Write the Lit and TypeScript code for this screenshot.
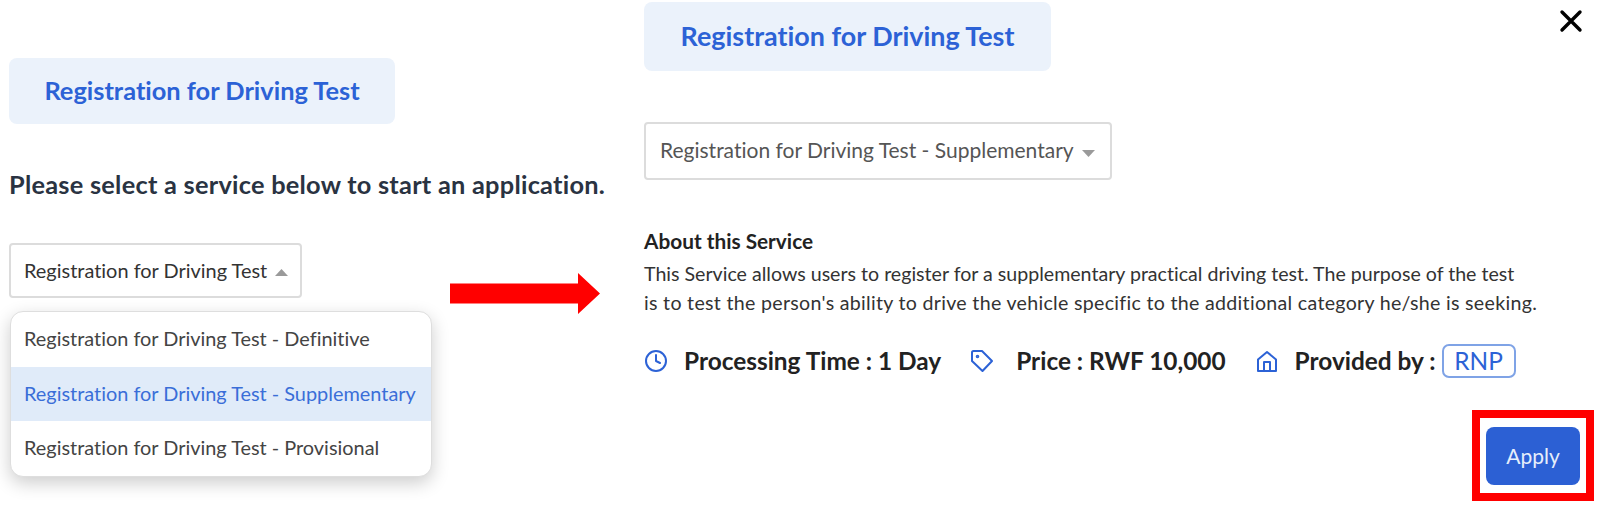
import { LitElement, html, css } from "lit";
import { customElement } from "lit/decorators.js";

@customElement("app-root")
export class AppRoot extends LitElement {
  static styles = css`
    :host { display: block; width: 1600px; height: 509px; position: relative; overflow: hidden; background: #fff; font-family: Lato, "Open Sans", sans-serif; font-variant-ligatures: none; color: #333; }
    .page { display: flex; height: 509px; }
    .left { width: 644px; flex: none; padding: 58px 0 0 9px; box-sizing: border-box; }
    .right { flex: 1; padding-top: 2px; display: flex; flex-direction: column; align-items: flex-start; }
    .tile { display: flex; align-items: center; justify-content: center; background: #ebf2fb; border-radius: 8px; color: #2c62d6; font-weight: 700; box-sizing: border-box; }
    .tile.a { width: 386px; height: 66px; font-size: 25.4px; padding-bottom: 3px; }
    .tile.b { width: 407px; height: 69px; font-size: 26.9px; padding-bottom: 3px; }
    h2 { margin: 42px 0 0; font-size: 25.35px; line-height: 36px; font-weight: 700; color: #2a3342; letter-spacing: 0.25px; white-space: nowrap; }
    .select { display: inline-flex; align-items: center; gap: 8px; border: 2px solid #dcdcdc; border-radius: 4px; box-sizing: border-box; background: #fff; white-space: nowrap; }
    .select.a { margin-top: 41px; width: 293px; height: 55px; padding: 0 0 2px 13px; color: #333; font-size: 19.95px; }
    .select.a svg { margin-top: 5px; }
    .select.b { margin-top: 51px; width: 468px; height: 58px; padding: 0 0 3px 14px; color: #555; font-size: 21px; }
    .select.b svg { margin-top: 7px; }
    .menu { margin: 13px 0 0 1px; width: 422px; height: 166px; border-radius: 13px; background: #fff; border: 1px solid #dedede; box-sizing: border-box; box-shadow: 0 6px 18px rgba(0,0,0,.2); overflow: hidden; display: flex; flex-direction: column; }
    .opt { flex: 1; display: flex; align-items: center; padding: 0 0 3px 13px; font-size: 19.9px; color: #444; white-space: nowrap; }
    .opt.on { background: #e0ebf9; color: #3a6ed8; }
    .about { margin-top: 46px; font-size: 19.6px; line-height: 29.5px; color: #333; white-space: nowrap; }
    .about b { display: block; font-weight: 700; color: #222; font-size: 20.8px; margin-bottom: 3px; }
    .line { display: block; }
    .line.stretch { letter-spacing: 0.3px; }
    .meta { display: flex; align-items: center; height: 34px; margin-top: 26px; font-size: 24.4px; font-weight: 700; color: #222; white-space: nowrap; }
    .meta svg { width: 24px; height: 24px; flex: none; fill: none; stroke: #2c62d6; stroke-width: 2; stroke-linecap: round; stroke-linejoin: round; }
    .meta span { margin-left: 16px; }
    .meta span.wide { margin-left: 22px; }
    .meta svg.n { margin-left: 29px; }
    .pill { margin-left: 6px; width: 74px; height: 34px; border: 2px solid #7fa3e6; border-radius: 7px; box-sizing: border-box; display: flex; align-items: center; justify-content: center; font-weight: 400; color: #2c62d6; }
    .highlight { align-self: flex-end; margin: 32.5px 6px 0 0; width: 122px; height: 91px; border: 8px solid #f00; box-sizing: border-box; display: flex; align-items: center; justify-content: center; }
    button { width: 94px; height: 58px; background: #2c60d4; border: 0; border-radius: 8px; color: #e6eefb; font: 400 21px Lato, sans-serif; padding: 0; }
    .arrow { position: absolute; left: 450px; top: 273px; width: 150px; height: 41px; }
    .close { position: absolute; left: 1559px; top: 9px; width: 24px; height: 24px; stroke: #000; stroke-width: 3.4; stroke-linecap: round; }
  `;

  render() {
    const caret = (up: boolean) => html`<svg width="13" height="7" viewBox="0 0 13 7" fill="#9a9a9a"><path d=${up ? "M6.5 0 13 7H0z" : "M0 0h13L6.5 7z"}></path></svg>`;
    return html`
      <div class="page">
        <section class="left">
          <div class="tile a">Registration for Driving Test</div>
          <h2>Please select a service below to start an application.</h2>
          <div class="select a">Registration for Driving Test ${caret(true)}</div>
          <div class="menu">
            <div class="opt">Registration for Driving Test - Definitive</div>
            <div class="opt on">Registration for Driving Test - Supplementary</div>
            <div class="opt">Registration for Driving Test - Provisional</div>
          </div>
        </section>
        <section class="right">
          <div class="tile b">Registration for Driving Test</div>
          <div class="select b">Registration for Driving Test - Supplementary ${caret(false)}</div>
          <div class="about">
            <b>About this Service</b>
            <span class="line">This Service allows users to register for a supplementary practical driving test. The purpose of the test</span>
            <span class="line stretch">is to test the person's ability to drive the vehicle specific to the additional category he/she is seeking.</span>
          </div>
          <div class="meta">
            <svg viewBox="0 0 24 24"><circle cx="12" cy="12" r="10"></circle><path d="M12 6v6l4 2"></path></svg>
            <span>Processing Time : 1 Day</span>
            <svg class="n" viewBox="0 0 24 24"><path d="M2 3.5A1.5 1.5 0 0 1 3.5 2H12l10 10-9.5 10L2 12z"></path><circle cx="7.5" cy="7.5" r=".8"></circle></svg>
            <span class="wide">Price : RWF 10,000</span>
            <svg class="n" viewBox="0 0 24 24"><path d="M3 10.5 12 3l9 7.5V22H3z"></path><path d="M9 22v-9h6v9"></path></svg>
            <span>Provided by :</span>
            <div class="pill">RNP</div>
          </div>
          <div class="highlight"><button>Apply</button></div>
        </section>
      </div>
      <svg class="arrow" viewBox="0 0 150 41" fill="#f00"><path d="M0 10.5h128V0l22 20.5L128 41V30.5H0z"></path></svg>
      <svg class="close" viewBox="0 0 24 24"><path d="M3 3l18 18M21 3 3 21"></path></svg>
    `;
  }
}
